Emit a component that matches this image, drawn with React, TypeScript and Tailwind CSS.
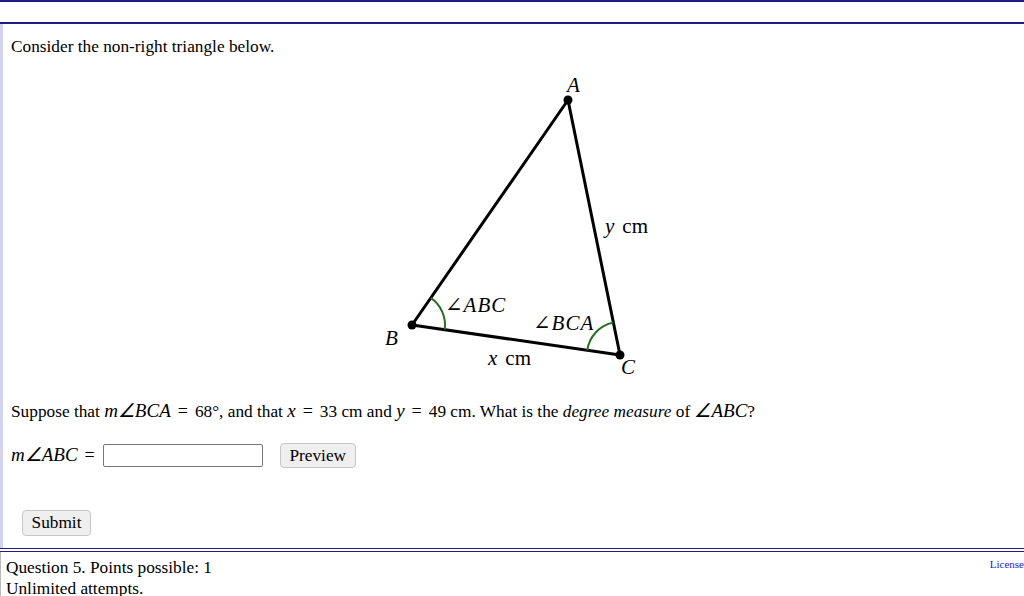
import React from "react";

const M = ({ children }: { children: React.ReactNode }) => (
  <span className="italic text-[19px]">{children}</span>
);
const Eq = () => <span className="mx-[7px] text-[18px]">=</span>;

function Triangle() {
  return (
    <svg
      width={300}
      height={315}
      viewBox="362 70 300 315"
      className="block ml-[351px] font-['Liberation_Serif','DejaVu_Serif',serif] text-[21px]"
    >
      <line x1={568} y1={100} x2={412} y2={325} stroke="#000" strokeWidth={3} strokeLinecap="round" />
      <line x1={412} y1={325} x2={620} y2={355} stroke="#000" strokeWidth={3} strokeLinecap="round" />
      <line x1={620} y1={355} x2={568} y2={100} stroke="#000" strokeWidth={3} strokeLinecap="round" />
      <path d="M430.8 297.9 A33 33 0 0 1 444.7 329.7" fill="none" stroke="#2a6e22" strokeWidth={2} />
      <path d="M587.3 350.3 A33 33 0 0 1 613.4 322.6" fill="none" stroke="#2a6e22" strokeWidth={2} />
      <circle cx={568} cy={100} r={4.5} fill="#000" />
      <circle cx={412} cy={325} r={4.5} fill="#000" />
      <circle cx={620} cy={355} r={4.5} fill="#000" />
      <text x={567} y={92} className="italic">A</text>
      <text x={385} y={345} className="italic">B</text>
      <text x={621} y={374} className="italic">C</text>
      <text x={605} y={233}>
        <tspan className="italic">y</tspan>
        <tspan dx={8}>cm</tspan>
      </text>
      <text x={488} y={365}>
        <tspan className="italic">x</tspan>
        <tspan dx={8}>cm</tspan>
      </text>
      <text x={445} y={312} className="italic" letterSpacing={1}>∠ABC</text>
      <text x={533} y={330} className="italic" letterSpacing={1}>∠BCA</text>
    </svg>
  );
}

export default function App() {
  return (
    <div className="w-[1024px] h-[596px] overflow-hidden bg-white text-black text-[17.3px] font-['Liberation_Serif','Times_New_Roman',serif]">
      <div className="h-[24px] border-t-[2px] border-b-[2px] border-[#1f1f80]" />
      <div className="h-[524px] border-l-[3px] border-[#d2d2f2] px-[8px]">
        <p className="pt-[14px] leading-[18px]">Consider the non-right triangle below.</p>
        <div className="mt-[14px]">
          <Triangle />
        </div>
        <p className="mt-[17px] leading-[18px]">
          Suppose that <M>m∠BCA</M>
          <Eq />
          68°, and that <M>x</M>
          <Eq />
          33 cm and <M>y</M>
          <Eq />
          49 cm. What is the <span className="italic">degree measure</span> of <M>∠ABC</M>?
        </p>
        <div className="mt-[22px] flex items-center h-[25px]">
          <span className="leading-[18px]">
            <M>m∠ABC</M>
            <Eq />
          </span>
          <input
            type="text"
            className="ml-[1px] w-[160px] h-[23px] border border-[#767676] rounded-[2px] bg-white"
          />
          <button className="ml-[17px] h-[25px] w-[76px] border border-[#c6c6c6] rounded-[4px] bg-[#efefef] text-[17.3px] leading-[18px]">
            Preview
          </button>
        </div>
        <div className="mt-[42px] pl-[11px]">
          <button className="h-[26px] w-[69px] border border-[#c6c6c6] rounded-[4px] bg-[#efefef] text-[17.3px] leading-[18px]">
            Submit
          </button>
        </div>
      </div>
      <div className="h-[4px] border-t border-b border-[#1f1f80]" />
      <div className="flex justify-between border-l border-[#bbbbbb] pl-[5px]">
        <div className="pt-[5px] leading-[21px]">
          <div>Question 5. Points possible: 1</div>
          <div>Unlimited attempts.</div>
        </div>
        <a className="pt-[5px] text-[11px] text-[#1a1acc] leading-[14px]">License</a>
      </div>
    </div>
  );
}
